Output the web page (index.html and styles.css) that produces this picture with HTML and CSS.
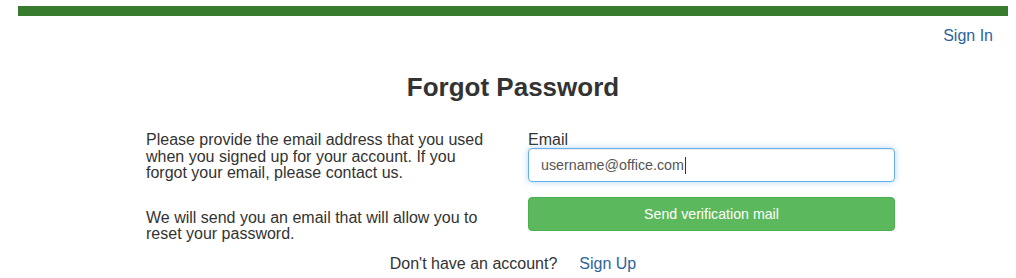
FILE: index.html
```html
<!DOCTYPE html>
<html>
<head>
<meta charset="utf-8">
<link rel="stylesheet" href="styles.css">
</head>
<body>
<div class="page">
  <div class="topbar"></div>
  <div class="nav"><a class="link" href="#">Sign In</a></div>
  <h1 class="title">Forgot Password</h1>
  <div class="grid">
    <div class="info">
      <p class="para">Please provide the email address that you used when you signed up for your account. If you forgot your email, please contact us.</p>
      <p class="para second">We will send you an email that will allow you to reset your password.</p>
    </div>
    <div class="form">
      <label class="label">Email</label>
      <div class="input"><span>username@office.com</span><span class="caret"></span></div>
      <button class="btn">Send verification mail</button>
    </div>
  </div>
  <div class="footer"><span>Don't have an account?</span><a class="link" href="#">Sign Up</a></div>
</div>
</body>
</html>
```
FILE: styles.css
```css
html, body { margin: 0; padding: 0; background: #fff; }
body { font-family: "Liberation Sans", Arial, sans-serif; color: #333; font-size: 16px; }
.page { width: 990px; margin-left: 18px; }
.topbar { margin-top: 6px; height: 10px; background: #387a2e; }
.nav { display: flex; justify-content: flex-end; padding: 11px 15px 0 0; height: 20px; }
.link { color: #2d649d; text-decoration: none; font-size: 16px; }
.title { margin: 26px 0 0; text-align: center; font-size: 26px; font-weight: bold; line-height: 28px; color: #333; }
.grid { display: grid; grid-template-columns: 352px 367px; column-gap: 30px; margin: 31px 0 0 128px; }
.para { margin: 0; font-size: 16px; line-height: 16.5px; }
.second { margin-top: 28px; }
.form { display: flex; flex-direction: column; }
.label { font-size: 16px; line-height: 16px; }
.input { margin-top: 0; height: 34px; box-sizing: border-box; border: 1px solid #66afe9; border-radius: 4px; box-shadow: inset 0 1px 1px rgba(0,0,0,.075), 0 0 6px rgba(102,175,233,.5); padding: 0 12px; display: flex; align-items: center; font-size: 14.3px; color: #555; }
.caret { display: inline-block; width: 1px; height: 17px; background: #333; margin-left: 1px; }
.btn { margin-top: 15px; height: 34px; background: #5cb85c; border: 1px solid #4cae4c; border-radius: 4px; color: #fff; font-family: inherit; font-size: 14.2px; padding: 0; }
.footer { display: flex; justify-content: center; gap: 22px; margin-top: 11px; font-size: 16px; line-height: 20px; }
```
